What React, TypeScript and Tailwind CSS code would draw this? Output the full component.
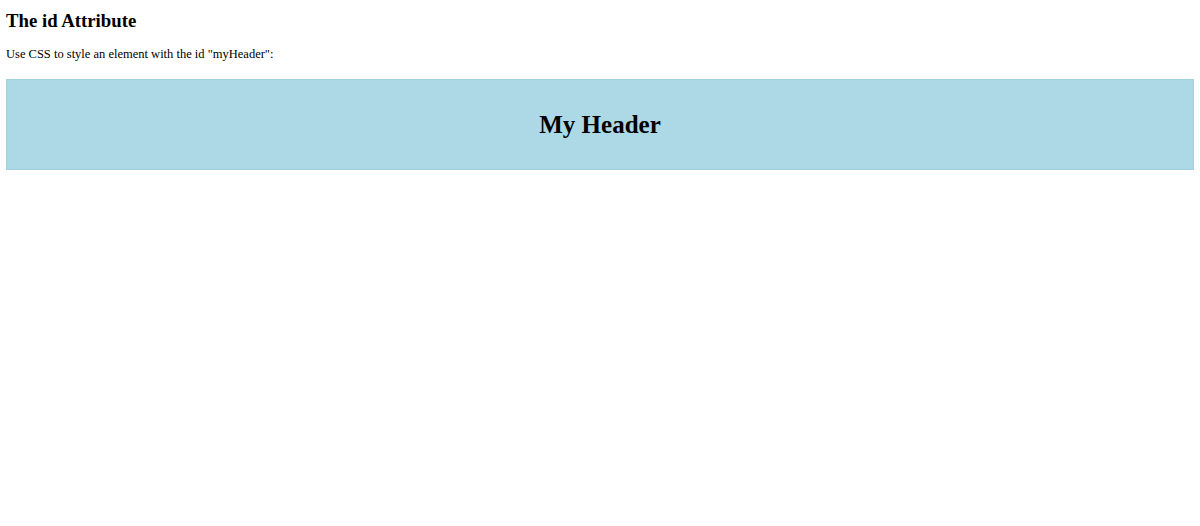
export default function App() {
  return (
    <div className="min-h-screen bg-white text-black px-[6px] pt-[11px]" style={{ fontFamily: '"Liberation Serif", "Times New Roman", serif' }}>
      <h2 className="text-[18.75px] leading-[20px] font-bold">The id Attribute</h2>
      <p className="mt-[16px] text-[12.5px] leading-[14px]">Use CSS to style an element with the id "myHeader":</p>
      <h1 className="mt-[18px] bg-[#add8e6] border border-[#a2d0df] pt-[31px] pb-[31px] text-center text-[25px] leading-[27px] font-bold">My Header</h1>
    </div>
  );
}
